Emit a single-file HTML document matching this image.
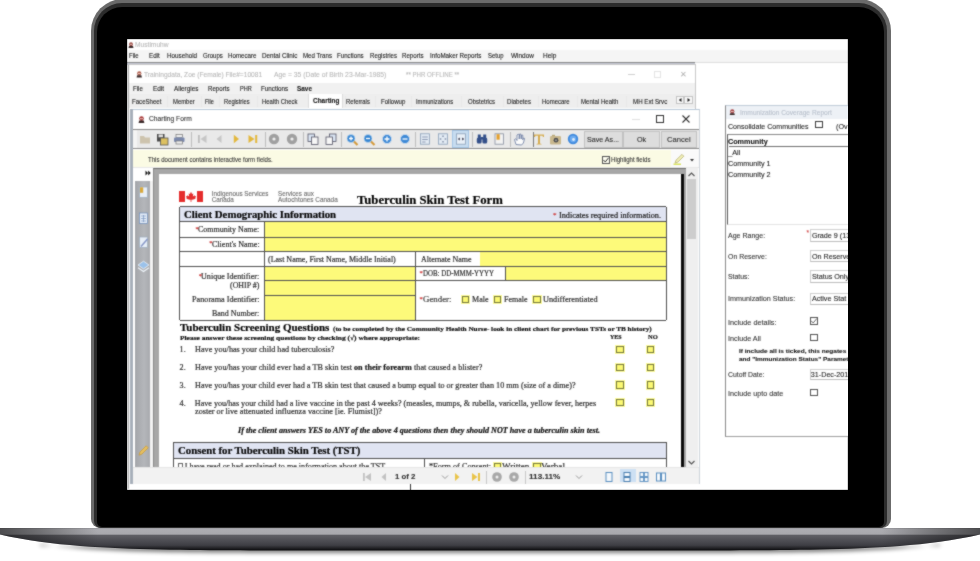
<!DOCTYPE html>
<html><head><meta charset="utf-8">
<style>
*{margin:0;padding:0;box-sizing:border-box}
html,body{width:980px;height:561px;overflow:hidden;background:#fff}
body{position:relative;font-family:"Liberation Sans",sans-serif;color:#222}
.a{position:absolute}
.lid{left:90.5px;top:-1px;width:800.5px;height:529px;border-radius:32px 32px 9px 9px;background:#6b6b6b}
.lid2{left:94px;top:3px;width:793px;height:525px;border-radius:28px 28px 7px 7px;background:#2c2c2c}
.lid3{left:97px;top:6.5px;width:787px;height:520.5px;border-radius:25px 25px 5px 5px;background:#000}
.screen{left:127px;top:39px;width:721px;height:451px;background:#fff;overflow:hidden}
.base{left:0;top:527px;width:980px;height:24px}
.t{white-space:nowrap;-webkit-text-stroke:0.1px currentColor}
.sf{-webkit-text-stroke:0.2px currentColor}
#scr{filter:url(#bl)}
</style></head><body>
<svg width="0" height="0" style="position:absolute"><filter id="bl" x="0" y="0" width="100%" height="100%" color-interpolation-filters="sRGB"><feConvolveMatrix order="3" kernelMatrix="1 2 1 2 14 2 1 2 1" divisor="26" edgeMode="duplicate"/></filter></svg>
<div class="a lid"></div>
<div class="a lid2"></div>
<div class="a lid3"></div>
<svg class="a" style="left:0;top:0" width="980" height="561" viewBox="0 0 980 561">
<defs>
<linearGradient id="bt" gradientUnits="userSpaceOnUse" x1="0" y1="528" x2="0" y2="551">
<stop offset="0" stop-color="#98989d"/><stop offset="0.06" stop-color="#adadb2"/><stop offset="0.27" stop-color="#a8a8ad"/><stop offset="0.31" stop-color="#606066"/><stop offset="0.75" stop-color="#3e3e44"/><stop offset="0.93" stop-color="#151518"/><stop offset="1" stop-color="#0a0a0a"/>
</linearGradient>
<linearGradient id="bh" gradientUnits="userSpaceOnUse" x1="0" y1="0" x2="980" y2="0">
<stop offset="0" stop-color="#000" stop-opacity="0.55"/><stop offset="0.04" stop-color="#000" stop-opacity="0.35"/><stop offset="0.1" stop-color="#000" stop-opacity="0"/><stop offset="0.9" stop-color="#000" stop-opacity="0"/><stop offset="0.96" stop-color="#000" stop-opacity="0.35"/><stop offset="1" stop-color="#000" stop-opacity="0.55"/>
</linearGradient>
<filter id="shb" x="-10%" y="-200%" width="120%" height="500%"><feGaussianBlur stdDeviation="2"/></filter>
</defs>
<path d="M40 546 L40 544.24 L50 545.51 L60 546.63 L70 547.60 L80 548.43 L90 549.16 L100 549.78 L110 550.32 L120 550.77 L130 551.16 L140 551.49 L150 551.77 L160 552.00 L170 552.19 L180 552.36 L190 552.49 L200 552.60 L210 552.68 L220 552.75 L230 552.81 L240 552.86 L250 552.89 L260 552.92 L270 552.94 L280 552.96 L290 552.97 L300 552.98 L310 552.99 L320 552.99 L330 552.99 L340 553.00 L350 553.00 L360 553.00 L370 553.00 L380 553.00 L390 553.00 L400 553.00 L410 553.00 L420 553.00 L430 553.00 L440 553.00 L450 553.00 L460 553.00 L470 553.00 L480 553.00 L490 553.00 L500 553.00 L510 553.00 L520 553.00 L530 553.00 L540 553.00 L550 553.00 L560 553.00 L570 553.00 L580 553.00 L590 553.00 L600 553.00 L610 553.00 L620 553.00 L630 553.00 L640 553.00 L650 552.99 L660 552.99 L670 552.99 L680 552.98 L690 552.97 L700 552.96 L710 552.94 L720 552.92 L730 552.89 L740 552.86 L750 552.81 L760 552.75 L770 552.68 L780 552.60 L790 552.49 L800 552.36 L810 552.19 L820 552.00 L830 551.77 L840 551.49 L850 551.16 L860 550.77 L870 550.32 L880 549.78 L890 549.16 L900 548.43 L910 547.60 L920 546.63 L930 545.51 L940 544.24 L940 546 Z" fill="#000" opacity="0.5" filter="url(#shb)"/>
<path d="M0 528 L980 528 L980 534.60 L970 536.74 L960 538.62 L950 540.28 L940 541.74 L930 543.01 L920 544.13 L910 545.10 L900 545.93 L890 546.66 L880 547.28 L870 547.82 L860 548.27 L850 548.66 L840 548.99 L830 549.27 L820 549.50 L810 549.69 L800 549.86 L790 549.99 L780 550.10 L770 550.18 L760 550.25 L750 550.31 L740 550.36 L730 550.39 L720 550.42 L710 550.44 L700 550.46 L690 550.47 L680 550.48 L670 550.49 L660 550.49 L650 550.49 L640 550.50 L630 550.50 L620 550.50 L610 550.50 L600 550.50 L590 550.50 L580 550.50 L570 550.50 L560 550.50 L550 550.50 L540 550.50 L530 550.50 L520 550.50 L510 550.50 L500 550.50 L490 550.50 L480 550.50 L470 550.50 L460 550.50 L450 550.50 L440 550.50 L430 550.50 L420 550.50 L410 550.50 L400 550.50 L390 550.50 L380 550.50 L370 550.50 L360 550.50 L350 550.50 L340 550.50 L330 550.49 L320 550.49 L310 550.49 L300 550.48 L290 550.47 L280 550.46 L270 550.44 L260 550.42 L250 550.39 L240 550.36 L230 550.31 L220 550.25 L210 550.18 L200 550.10 L190 549.99 L180 549.86 L170 549.69 L160 549.50 L150 549.27 L140 548.99 L130 548.66 L120 548.27 L110 547.82 L100 547.28 L90 546.66 L80 545.93 L70 545.10 L60 544.13 L50 543.01 L40 541.74 L30 540.28 L20 538.62 L10 536.74 L0 534.60 Z" fill="url(#bt)"/>
<path d="M0 528 L980 528 L980 534.60 L970 536.74 L960 538.62 L950 540.28 L940 541.74 L930 543.01 L920 544.13 L910 545.10 L900 545.93 L890 546.66 L880 547.28 L870 547.82 L860 548.27 L850 548.66 L840 548.99 L830 549.27 L820 549.50 L810 549.69 L800 549.86 L790 549.99 L780 550.10 L770 550.18 L760 550.25 L750 550.31 L740 550.36 L730 550.39 L720 550.42 L710 550.44 L700 550.46 L690 550.47 L680 550.48 L670 550.49 L660 550.49 L650 550.49 L640 550.50 L630 550.50 L620 550.50 L610 550.50 L600 550.50 L590 550.50 L580 550.50 L570 550.50 L560 550.50 L550 550.50 L540 550.50 L530 550.50 L520 550.50 L510 550.50 L500 550.50 L490 550.50 L480 550.50 L470 550.50 L460 550.50 L450 550.50 L440 550.50 L430 550.50 L420 550.50 L410 550.50 L400 550.50 L390 550.50 L380 550.50 L370 550.50 L360 550.50 L350 550.50 L340 550.50 L330 550.49 L320 550.49 L310 550.49 L300 550.48 L290 550.47 L280 550.46 L270 550.44 L260 550.42 L250 550.39 L240 550.36 L230 550.31 L220 550.25 L210 550.18 L200 550.10 L190 549.99 L180 549.86 L170 549.69 L160 549.50 L150 549.27 L140 548.99 L130 548.66 L120 548.27 L110 547.82 L100 547.28 L90 546.66 L80 545.93 L70 545.10 L60 544.13 L50 543.01 L40 541.74 L30 540.28 L20 538.62 L10 536.74 L0 534.60 Z" fill="url(#bh)"/>
</svg>
<div class="a" id="scr" style="left:0;top:0;width:980px;height:561px;clip-path:inset(39px 132px 71px 127px)">
<div class="a" style="left:127.0px;top:39.0px;width:721.0px;height:451.0px;background:#fff"></div>
<div class="a" style="left:127.0px;top:39.0px;width:721.0px;height:11.0px;background:#fff"></div>
<svg class="a" style="left:128.0px;top:41.5px" width="6" height="6" viewBox="0 0 7 7"><circle cx="3.5" cy="2.6" r="2.3" fill="#9a4a44"/><path d="M0.6 7 L1.2 4.6 L5.8 4.6 L6.4 7Z" fill="#3a2a2a"/><rect x="2" y="2.2" width="3" height="1" fill="#e8c8c0"/></svg>
<div class="a t" style="left:135.2px;top:41.5px;font-family:'Liberation Sans',sans-serif;font-weight:normal;font-style:normal;font-size:6.6px;line-height:6.6px;color:#b8b8b8;transform:scaleX(1.007);transform-origin:0 0;">Mustimuhw</div>
<div class="a" style="left:127.0px;top:50.0px;width:721.0px;height:12.0px;background:#f5f5f5"></div>
<div class="a t" style="left:129.0px;top:52.8px;font-family:'Liberation Sans',sans-serif;font-weight:normal;font-style:normal;font-size:6.7px;line-height:6.7px;color:#1a1a1a;transform:scaleX(0.898);transform-origin:0 0;">File</div>
<div class="a t" style="left:149.0px;top:52.8px;font-family:'Liberation Sans',sans-serif;font-weight:normal;font-style:normal;font-size:6.7px;line-height:6.7px;color:#1a1a1a;transform:scaleX(0.927);transform-origin:0 0;">Edit</div>
<div class="a t" style="left:167.3px;top:52.8px;font-family:'Liberation Sans',sans-serif;font-weight:normal;font-style:normal;font-size:6.7px;line-height:6.7px;color:#1a1a1a;transform:scaleX(0.940);transform-origin:0 0;">Household</div>
<div class="a t" style="left:202.5px;top:52.8px;font-family:'Liberation Sans',sans-serif;font-weight:normal;font-style:normal;font-size:6.7px;line-height:6.7px;color:#1a1a1a;transform:scaleX(0.906);transform-origin:0 0;">Groups</div>
<div class="a t" style="left:228.4px;top:52.8px;font-family:'Liberation Sans',sans-serif;font-weight:normal;font-style:normal;font-size:6.7px;line-height:6.7px;color:#1a1a1a;transform:scaleX(0.922);transform-origin:0 0;">Homecare</div>
<div class="a t" style="left:262.0px;top:52.8px;font-family:'Liberation Sans',sans-serif;font-weight:normal;font-style:normal;font-size:6.7px;line-height:6.7px;color:#1a1a1a;transform:scaleX(0.941);transform-origin:0 0;">Dental Clinic</div>
<div class="a t" style="left:302.9px;top:52.8px;font-family:'Liberation Sans',sans-serif;font-weight:normal;font-style:normal;font-size:6.7px;line-height:6.7px;color:#1a1a1a;transform:scaleX(0.916);transform-origin:0 0;">Med Trans</div>
<div class="a t" style="left:337.4px;top:52.8px;font-family:'Liberation Sans',sans-serif;font-weight:normal;font-style:normal;font-size:6.7px;line-height:6.7px;color:#1a1a1a;transform:scaleX(0.919);transform-origin:0 0;">Functions</div>
<div class="a t" style="left:369.6px;top:52.8px;font-family:'Liberation Sans',sans-serif;font-weight:normal;font-style:normal;font-size:6.7px;line-height:6.7px;color:#1a1a1a;transform:scaleX(0.906);transform-origin:0 0;">Registries</div>
<div class="a t" style="left:402.4px;top:52.8px;font-family:'Liberation Sans',sans-serif;font-weight:normal;font-style:normal;font-size:6.7px;line-height:6.7px;color:#1a1a1a;transform:scaleX(0.921);transform-origin:0 0;">Reports</div>
<div class="a t" style="left:430.0px;top:52.8px;font-family:'Liberation Sans',sans-serif;font-weight:normal;font-style:normal;font-size:6.7px;line-height:6.7px;color:#1a1a1a;transform:scaleX(0.933);transform-origin:0 0;">InfoMaker Reports</div>
<div class="a t" style="left:487.5px;top:52.8px;font-family:'Liberation Sans',sans-serif;font-weight:normal;font-style:normal;font-size:6.7px;line-height:6.7px;color:#1a1a1a;transform:scaleX(0.885);transform-origin:0 0;">Setup</div>
<div class="a t" style="left:511.2px;top:52.8px;font-family:'Liberation Sans',sans-serif;font-weight:normal;font-style:normal;font-size:6.7px;line-height:6.7px;color:#1a1a1a;transform:scaleX(0.965);transform-origin:0 0;">Window</div>
<div class="a t" style="left:543.0px;top:52.8px;font-family:'Liberation Sans',sans-serif;font-weight:normal;font-style:normal;font-size:6.7px;line-height:6.7px;color:#1a1a1a;transform:scaleX(0.972);transform-origin:0 0;">Help</div>
<div class="a" style="left:127.0px;top:61.8px;width:568.0px;height:1.6px;background:#8a8a8a"></div>
<div class="a" style="left:695.0px;top:61.8px;width:153.0px;height:1.2px;background:#dedede"></div>
<div class="a" style="left:127.0px;top:63.4px;width:568.0px;height:1.2px;background:#c4c8d4"></div>
<div class="a" style="left:127.5px;top:64.3px;width:568.0px;height:425.0px;background:#fff;border:1px solid #c8c8c8;border-left:1px solid #a8a8a8"></div>
<svg class="a" style="left:135.5px;top:71.2px" width="6.5" height="6.5" viewBox="0 0 7 7"><circle cx="3.5" cy="2.6" r="2.3" fill="#b06050"/><path d="M0.6 7 L1.2 4.6 L5.8 4.6 L6.4 7Z" fill="#3a2a2a"/><rect x="2" y="2.2" width="3" height="1" fill="#e8c8c0"/></svg>
<div class="a t" style="left:143.9px;top:71.9px;font-family:'Liberation Sans',sans-serif;font-weight:normal;font-style:normal;font-size:6.7px;line-height:6.7px;color:#b8b8b8;transform:scaleX(0.987);transform-origin:0 0;">Trainingdata, Zoe (Female)  File#=10081</div>
<div class="a t" style="left:274.0px;top:71.9px;font-family:'Liberation Sans',sans-serif;font-weight:normal;font-style:normal;font-size:6.7px;line-height:6.7px;color:#b8b8b8;transform:scaleX(1.015);transform-origin:0 0;">Age = 35 (Date of Birth 23-Mar-1985)</div>
<div class="a t" style="left:405.7px;top:72.1px;font-family:'Liberation Sans',sans-serif;font-weight:normal;font-style:normal;font-size:6.4px;line-height:6.4px;color:#b8b8b8;transform:scaleX(0.955);transform-origin:0 0;">** PHR OFFLINE **</div>
<div class="a" style="left:628.0px;top:74.0px;width:7.0px;height:1.0px;background:#d0d0d0"></div>
<div class="a" style="left:654.0px;top:71.0px;width:6.5px;height:6.5px;border:1px solid #e4e4e4"></div>
<div class="a t" style="left:679.5px;top:71.0px;font-family:'Liberation Sans',sans-serif;font-weight:normal;font-style:normal;font-size:8px;line-height:8px;color:#b4b4b4;">✕</div>
<div class="a" style="left:128.5px;top:82.8px;width:566.0px;height:11.0px;background:#f1f1f1"></div>
<div class="a t" style="left:133.4px;top:85.7px;font-family:'Liberation Sans',sans-serif;font-weight:normal;font-style:normal;font-size:6.7px;line-height:6.7px;color:#1a1a1a;transform:scaleX(0.908);transform-origin:0 0;">File</div>
<div class="a t" style="left:152.7px;top:85.7px;font-family:'Liberation Sans',sans-serif;font-weight:normal;font-style:normal;font-size:6.7px;line-height:6.7px;color:#1a1a1a;transform:scaleX(0.961);transform-origin:0 0;">Edit</div>
<div class="a t" style="left:173.9px;top:85.7px;font-family:'Liberation Sans',sans-serif;font-weight:normal;font-style:normal;font-size:6.7px;line-height:6.7px;color:#1a1a1a;transform:scaleX(0.950);transform-origin:0 0;">Allergies</div>
<div class="a t" style="left:207.9px;top:85.7px;font-family:'Liberation Sans',sans-serif;font-weight:normal;font-style:normal;font-size:6.7px;line-height:6.7px;color:#1a1a1a;transform:scaleX(0.916);transform-origin:0 0;">Reports</div>
<div class="a t" style="left:239.7px;top:85.7px;font-family:'Liberation Sans',sans-serif;font-weight:normal;font-style:normal;font-size:6.7px;line-height:6.7px;color:#1a1a1a;transform:scaleX(0.827);transform-origin:0 0;">PHR</div>
<div class="a t" style="left:261.2px;top:85.7px;font-family:'Liberation Sans',sans-serif;font-weight:normal;font-style:normal;font-size:6.7px;line-height:6.7px;color:#1a1a1a;transform:scaleX(0.936);transform-origin:0 0;">Functions</div>
<div class="a t" style="left:297.0px;top:85.7px;font-family:'Liberation Sans',sans-serif;font-weight:bold;font-style:normal;font-size:6.7px;line-height:6.7px;color:#1a1a1a;transform:scaleX(0.959);transform-origin:0 0;">Save</div>
<div class="a" style="left:128.5px;top:93.8px;width:566.0px;height:14.3px;background:#eeeeee"></div>
<div class="a t" style="left:132.1px;top:99.2px;font-family:'Liberation Sans',sans-serif;font-weight:normal;font-style:normal;font-size:6.7px;line-height:6.7px;color:#222;transform:scaleX(0.910);transform-origin:0 0;">FaceSheet</div>
<div class="a t" style="left:173.3px;top:99.2px;font-family:'Liberation Sans',sans-serif;font-weight:normal;font-style:normal;font-size:6.7px;line-height:6.7px;color:#222;transform:scaleX(0.883);transform-origin:0 0;">Member</div>
<div class="a t" style="left:205.1px;top:99.2px;font-family:'Liberation Sans',sans-serif;font-weight:normal;font-style:normal;font-size:6.7px;line-height:6.7px;color:#222;transform:scaleX(0.824);transform-origin:0 0;">File</div>
<div class="a t" style="left:223.5px;top:99.2px;font-family:'Liberation Sans',sans-serif;font-weight:normal;font-style:normal;font-size:6.7px;line-height:6.7px;color:#222;transform:scaleX(0.863);transform-origin:0 0;">Registries</div>
<div class="a t" style="left:262.1px;top:99.2px;font-family:'Liberation Sans',sans-serif;font-weight:normal;font-style:normal;font-size:6.7px;line-height:6.7px;color:#222;transform:scaleX(0.883);transform-origin:0 0;">Health Check</div>
<div class="a" style="left:308.3px;top:94.3px;width:34.3px;height:14.0px;background:#fff;border-left:1px solid #dcdcdc;border-right:1px solid #dcdcdc"></div>
<div class="a t" style="left:312.5px;top:97.9px;font-family:'Liberation Sans',sans-serif;font-weight:bold;font-style:normal;font-size:6.6px;line-height:6.6px;color:#111;transform:scaleX(0.977);transform-origin:0 0;">Charting</div>
<div class="a t" style="left:345.6px;top:99.2px;font-family:'Liberation Sans',sans-serif;font-weight:normal;font-style:normal;font-size:6.7px;line-height:6.7px;color:#222;transform:scaleX(0.879);transform-origin:0 0;">Referrals</div>
<div class="a t" style="left:380.9px;top:99.2px;font-family:'Liberation Sans',sans-serif;font-weight:normal;font-style:normal;font-size:6.7px;line-height:6.7px;color:#222;transform:scaleX(0.910);transform-origin:0 0;">Followup</div>
<div class="a t" style="left:416.4px;top:99.2px;font-family:'Liberation Sans',sans-serif;font-weight:normal;font-style:normal;font-size:6.7px;line-height:6.7px;color:#222;transform:scaleX(0.859);transform-origin:0 0;">Immunizations</div>
<div class="a t" style="left:467.8px;top:99.2px;font-family:'Liberation Sans',sans-serif;font-weight:normal;font-style:normal;font-size:6.7px;line-height:6.7px;color:#222;transform:scaleX(0.895);transform-origin:0 0;">Obstetrics</div>
<div class="a t" style="left:507.0px;top:99.2px;font-family:'Liberation Sans',sans-serif;font-weight:normal;font-style:normal;font-size:6.7px;line-height:6.7px;color:#222;transform:scaleX(0.908);transform-origin:0 0;">Diabetes</div>
<div class="a t" style="left:542.1px;top:99.2px;font-family:'Liberation Sans',sans-serif;font-weight:normal;font-style:normal;font-size:6.7px;line-height:6.7px;color:#222;transform:scaleX(0.896);transform-origin:0 0;">Homecare</div>
<div class="a t" style="left:581.3px;top:99.2px;font-family:'Liberation Sans',sans-serif;font-weight:normal;font-style:normal;font-size:6.7px;line-height:6.7px;color:#222;transform:scaleX(0.907);transform-origin:0 0;">Mental Health</div>
<div class="a t" style="left:632.8px;top:99.2px;font-family:'Liberation Sans',sans-serif;font-weight:normal;font-style:normal;font-size:6.7px;line-height:6.7px;color:#222;transform:scaleX(0.921);transform-origin:0 0;">MH Ext Srvc</div>
<div class="a" style="left:167.0px;top:96.0px;width:1.0px;height:11.0px;background:#e8e8e8"></div>
<div class="a" style="left:201.0px;top:96.0px;width:1.0px;height:11.0px;background:#e8e8e8"></div>
<div class="a" style="left:219.0px;top:96.0px;width:1.0px;height:11.0px;background:#e8e8e8"></div>
<div class="a" style="left:257.0px;top:96.0px;width:1.0px;height:11.0px;background:#e8e8e8"></div>
<div class="a" style="left:345.0px;top:96.0px;width:1.0px;height:11.0px;background:#e8e8e8"></div>
<div class="a" style="left:375.0px;top:96.0px;width:1.0px;height:11.0px;background:#e8e8e8"></div>
<div class="a" style="left:411.0px;top:96.0px;width:1.0px;height:11.0px;background:#e8e8e8"></div>
<div class="a" style="left:461.0px;top:96.0px;width:1.0px;height:11.0px;background:#e8e8e8"></div>
<div class="a" style="left:503.0px;top:96.0px;width:1.0px;height:11.0px;background:#e8e8e8"></div>
<div class="a" style="left:538.0px;top:96.0px;width:1.0px;height:11.0px;background:#e8e8e8"></div>
<div class="a" style="left:577.0px;top:96.0px;width:1.0px;height:11.0px;background:#e8e8e8"></div>
<div class="a" style="left:626.0px;top:96.0px;width:1.0px;height:11.0px;background:#e8e8e8"></div>
<div class="a" style="left:675.7px;top:95.9px;width:8.5px;height:8.5px;background:#f8f8f8;border:1px solid #c4c4c4"></div>
<div class="a" style="left:684.3px;top:95.9px;width:8.5px;height:8.5px;background:#f8f8f8;border:1px solid #c4c4c4"></div>
<svg class="a" style="left:677.0px;top:96.2px" width="6" height="8" viewBox="0 0 6 8"><path d="M4.5 2 L1.8 4 L4.5 6Z" fill="#222"/></svg>
<svg class="a" style="left:685.5px;top:96.2px" width="6" height="8" viewBox="0 0 6 8"><path d="M1.5 2 L4.2 4 L1.5 6Z" fill="#222"/></svg>
<div class="a" style="left:130.0px;top:109.3px;width:569.5px;height:376.0px;background:#fff;border:1px solid #cdd3da;border-top:1px solid #b8c8d8"></div>
<div class="a" style="left:130.0px;top:109.3px;width:3.0px;height:376.0px;background:#a8b0ba"></div>
<svg class="a" style="left:137.5px;top:115.5px" width="7" height="7" viewBox="0 0 7 7"><circle cx="3.5" cy="2.6" r="2.3" fill="#a83838"/><path d="M0.6 7 L1.2 4.6 L5.8 4.6 L6.4 7Z" fill="#3a2a2a"/><rect x="2" y="2.2" width="3" height="1" fill="#e8c8c0"/></svg>
<div class="a t" style="left:148.6px;top:116.1px;font-family:'Liberation Sans',sans-serif;font-weight:normal;font-style:normal;font-size:6.8px;line-height:6.8px;color:#333;transform:scaleX(0.983);transform-origin:0 0;">Charting Form</div>
<div class="a" style="left:632.0px;top:118.8px;width:8.0px;height:1.0px;background:#e0e0e0"></div>
<div class="a" style="left:656.0px;top:114.8px;width:8.0px;height:8.0px;border:1.3px solid #333"></div>
<svg class="a" style="left:681.4px;top:114.0px" width="10" height="10" viewBox="0 0 10 10"><path d="M1.5 1.5 L8.5 8.5 M8.5 1.5 L1.5 8.5" stroke="#333" stroke-width="1.1"/></svg>
<div class="a" style="left:133.0px;top:128.6px;width:566.0px;height:20.6px;background:#e9e9e9;border-top:1.4px solid #8a8a8a;border-bottom:1.4px solid #8e8e8e"></div>
<div class="a" style="left:133.0px;top:130.0px;width:4.0px;height:18.0px;background:#f4f4f4"></div>
<div class="a" style="left:133.0px;top:149.5px;width:538.0px;height:17.0px;background:#fbfbe4"></div>
<div class="a" style="left:671.0px;top:149.5px;width:27.5px;height:18.0px;background:#fafafa"></div>
<div class="a" style="left:133.0px;top:166.5px;width:566.0px;height:2.0px;background:#e8e8e8"></div>
<div class="a t" style="left:148.4px;top:157.1px;font-family:'Liberation Sans',sans-serif;font-weight:normal;font-style:normal;font-size:6.9px;line-height:6.9px;color:#333;transform:scaleX(0.880);transform-origin:0 0;">This document contains interactive form fields.</div>
<div class="a" style="left:602.0px;top:155.5px;width:8.0px;height:8.0px;border:1px solid #555;background:#fdfdf0"></div>
<svg class="a" style="left:602.0px;top:155.5px" width="8" height="8" viewBox="0 0 8 8"><path d="M1.5 4 L3.3 6 L6.5 1.8" stroke="#333" stroke-width="1" fill="none"/></svg>
<div class="a t" style="left:610.8px;top:157.0px;font-family:'Liberation Sans',sans-serif;font-weight:normal;font-style:normal;font-size:6.4px;line-height:6.4px;color:#333;transform:scaleX(0.949);transform-origin:0 0;">Highlight fields</div>
<svg class="a" style="left:689.2px;top:156.5px" width="6" height="6" viewBox="0 0 6 6"><path d="M1 2 L5 2 L3 4.5Z" fill="#333"/></svg>
<div class="a" style="left:133.0px;top:168.0px;width:566.0px;height:301.0px;background:#fff"></div>
<div class="a" style="left:153.4px;top:168.2px;width:532.3px;height:301.0px;background:#a7a7a7;border-top:1.5px solid #6e6e6e;border-left:1px solid #8a8a8a"></div>
<div class="a" style="left:159.4px;top:174.2px;width:522.0px;height:295.0px;background:#fff"></div>
<div class="a" style="left:681.4px;top:174.2px;width:2.6px;height:295.0px;background:#0c0c0c"></div>
<div class="a" style="left:685.7px;top:168.2px;width:12.5px;height:301.0px;background:#efefef"></div>
<div class="a" style="left:687.0px;top:179.0px;width:9.0px;height:60.0px;background:#cdcdcd"></div>
<svg class="a" style="left:687.0px;top:171.0px" width="9" height="7" viewBox="0 0 9 7"><path d="M1.5 5 L4.5 2 L7.5 5" stroke="#555" stroke-width="1.2" fill="none"/></svg>
<svg class="a" style="left:687.0px;top:458.5px" width="9" height="7" viewBox="0 0 9 7"><path d="M1.5 2 L4.5 5 L7.5 2" stroke="#555" stroke-width="1.2" fill="none"/></svg>
<svg class="a" style="left:144.6px;top:170.2px" width="6" height="6" viewBox="0 0 6 6"><path d="M0.5 0.5 L3 3 L0.5 5.5Z M3.2 0.5 L5.7 3 L3.2 5.5Z" fill="#111"/></svg>
<div class="a" style="left:135.0px;top:181.0px;width:15.2px;height:286.4px;background:linear-gradient(90deg,#a4a6aa,#b4b6ba 60%,#a8aaae)"></div>
<div class="a" style="left:150.2px;top:181.0px;width:3.2px;height:286.4px;background:#f2f2f2"></div>
<div class="a" style="left:179.0px;top:190.5px;width:5.6px;height:11.4px;background:#e52d2d"></div>
<div class="a" style="left:196.9px;top:190.5px;width:5.7px;height:11.4px;background:#e52d2d"></div>
<svg class="a" style="left:184.7px;top:190.5px" width="12" height="11.4" viewBox="0 0 12 11.4"><path d="M6 0.8 L7.1 3 L8.3 2.4 L7.9 5.6 L9.6 4.2 L10 5.3 L11.2 5.1 L10.2 7.3 L10.8 7.8 L7.3 8.7 L6.4 8.8 L6.4 11 L5.6 11 L5.6 8.8 L4.7 8.7 L1.2 7.8 L1.8 7.3 L0.8 5.1 L2 5.3 L2.4 4.2 L4.1 5.6 L3.7 2.4 L4.9 3 Z" fill="#e52d2d"/></svg>
<div class="a t" style="left:211.8px;top:190.7px;font-family:'Liberation Sans',sans-serif;font-weight:normal;font-style:normal;font-size:6.3px;line-height:6.3px;color:#6a6a6a;">Indigenous Services</div>
<div class="a t" style="left:211.8px;top:197.1px;font-family:'Liberation Sans',sans-serif;font-weight:normal;font-style:normal;font-size:6.3px;line-height:6.3px;color:#6a6a6a;">Canada</div>
<div class="a t" style="left:278.0px;top:190.7px;font-family:'Liberation Sans',sans-serif;font-weight:normal;font-style:normal;font-size:6.3px;line-height:6.3px;color:#6a6a6a;transform:scaleX(0.993);transform-origin:0 0;">Services aux</div>
<div class="a t" style="left:278.0px;top:197.1px;font-family:'Liberation Sans',sans-serif;font-weight:normal;font-style:normal;font-size:6.3px;line-height:6.3px;color:#6a6a6a;transform:scaleX(1.015);transform-origin:0 0;">Autochtones Canada</div>
<div class="a t sf" style="left:356.9px;top:193.7px;font-family:'Liberation Serif',serif;font-weight:bold;font-style:normal;font-size:12.4px;line-height:12.4px;color:#000;transform:scaleX(1.025);transform-origin:0 0;">Tuberculin Skin Test Form</div>
<div class="a" style="left:179.7px;top:206.6px;width:486.8px;height:15.4px;background:#e0e4f2"></div>
<div class="a t sf" style="left:184.1px;top:209.9px;font-family:'Liberation Serif',serif;font-weight:bold;font-style:normal;font-size:10.2px;line-height:10.2px;color:#050505;transform:scaleX(1.058);transform-origin:0 0;">Client Demographic Information</div>
<div class="a t sf" style="left:558.8px;top:211.9px;font-family:'Liberation Serif',serif;font-weight:normal;font-style:normal;font-size:8.0px;line-height:8.0px;color:#1a1a1a;transform:scaleX(1.027);transform-origin:0 0;">Indicates required information.</div>
<div class="a t sf" style="left:553.1px;top:211.7px;font-family:'Liberation Serif',serif;font-weight:normal;font-style:normal;font-size:7px;line-height:7px;color:#d04040;">*</div>
<div class="a" style="left:264.3px;top:222.0px;width:402.2px;height:29.8px;background:#fdfa7a"></div>
<div class="a" style="left:479.7px;top:251.8px;width:186.8px;height:14.4px;background:#fdfa7a"></div>
<div class="a" style="left:506.0px;top:266.2px;width:160.5px;height:14.6px;background:#fdfa7a"></div>
<div class="a" style="left:264.3px;top:266.2px;width:151.5px;height:53.9px;background:#fdfa7a"></div>
<div class="a" style="left:179.7px;top:206.0px;width:486.8px;height:1.1px;background:#505050"></div>
<div class="a" style="left:179.7px;top:221.4px;width:486.8px;height:1.1px;background:#505050"></div>
<div class="a" style="left:179.7px;top:236.6px;width:486.8px;height:1.1px;background:#505050"></div>
<div class="a" style="left:179.7px;top:251.2px;width:486.8px;height:1.1px;background:#505050"></div>
<div class="a" style="left:179.7px;top:265.6px;width:486.8px;height:1.1px;background:#505050"></div>
<div class="a" style="left:264.3px;top:280.2px;width:402.2px;height:1.1px;background:#505050"></div>
<div class="a" style="left:264.3px;top:294.6px;width:151.5px;height:1.1px;background:#505050"></div>
<div class="a" style="left:179.7px;top:319.6px;width:486.8px;height:1.1px;background:#505050"></div>
<div class="a" style="left:179.1px;top:206.6px;width:1.1px;height:113.5px;background:#505050"></div>
<div class="a" style="left:666.0px;top:206.6px;width:1.1px;height:113.5px;background:#505050"></div>
<div class="a" style="left:263.8px;top:222.0px;width:1.1px;height:98.1px;background:#505050"></div>
<div class="a" style="left:415.2px;top:251.8px;width:1.1px;height:68.3px;background:#505050"></div>
<div class="a" style="left:505.4px;top:266.2px;width:1.1px;height:14.6px;background:#505050"></div>
<div class="a t sf" style="left:197.9px;top:226.0px;font-family:'Liberation Serif',serif;font-weight:normal;font-style:normal;font-size:8.1px;line-height:8.1px;color:#2e2e2e;transform:scaleX(0.984);transform-origin:0 0;">Community Name:</div>
<div class="a t sf" style="left:195.6px;top:225.7px;font-family:'Liberation Serif',serif;font-weight:normal;font-style:normal;font-size:6.5px;line-height:6.5px;color:#d04040;">*</div>
<div class="a t sf" style="left:211.5px;top:240.7px;font-family:'Liberation Serif',serif;font-weight:normal;font-style:normal;font-size:8.1px;line-height:8.1px;color:#2e2e2e;transform:scaleX(0.993);transform-origin:0 0;">Client's Name:</div>
<div class="a t sf" style="left:209.2px;top:240.4px;font-family:'Liberation Serif',serif;font-weight:normal;font-style:normal;font-size:6.5px;line-height:6.5px;color:#d04040;">*</div>
<div class="a t sf" style="left:201.0px;top:273.0px;font-family:'Liberation Serif',serif;font-weight:normal;font-style:normal;font-size:8.1px;line-height:8.1px;color:#2e2e2e;">Unique Identifier:</div>
<div class="a t sf" style="left:198.7px;top:272.7px;font-family:'Liberation Serif',serif;font-weight:normal;font-style:normal;font-size:6.5px;line-height:6.5px;color:#d04040;">*</div>
<div class="a t sf" style="left:229.8px;top:282.3px;font-family:'Liberation Serif',serif;font-weight:normal;font-style:normal;font-size:8.1px;line-height:8.1px;color:#2e2e2e;transform:scaleX(0.978);transform-origin:0 0;">(OHIP #)</div>
<div class="a t sf" style="left:191.6px;top:295.9px;font-family:'Liberation Serif',serif;font-weight:normal;font-style:normal;font-size:8.1px;line-height:8.1px;color:#2e2e2e;transform:scaleX(1.012);transform-origin:0 0;">Panorama Identifier:</div>
<div class="a t sf" style="left:212.0px;top:310.0px;font-family:'Liberation Serif',serif;font-weight:normal;font-style:normal;font-size:8.1px;line-height:8.1px;color:#2e2e2e;transform:scaleX(0.985);transform-origin:0 0;">Band Number:</div>
<div class="a t sf" style="left:268.0px;top:255.5px;font-family:'Liberation Serif',serif;font-weight:normal;font-style:normal;font-size:8.1px;line-height:8.1px;color:#2e2e2e;transform:scaleX(0.985);transform-origin:0 0;">(Last Name, First Name, Middle Initial)</div>
<div class="a t sf" style="left:420.5px;top:255.5px;font-family:'Liberation Serif',serif;font-weight:normal;font-style:normal;font-size:8.1px;line-height:8.1px;color:#2e2e2e;transform:scaleX(0.981);transform-origin:0 0;">Alternate Name</div>
<div class="a t sf" style="left:419.5px;top:270.0px;font-family:'Liberation Serif',serif;font-weight:normal;font-style:normal;font-size:6.5px;line-height:6.5px;color:#d04040;">*</div>
<div class="a t sf" style="left:422.5px;top:270.1px;font-family:'Liberation Serif',serif;font-weight:normal;font-style:normal;font-size:8.1px;line-height:8.1px;color:#2e2e2e;transform:scaleX(0.851);transform-origin:0 0;">DOB: DD-MMM-YYYY</div>
<div class="a t sf" style="left:419.5px;top:296.0px;font-family:'Liberation Serif',serif;font-weight:normal;font-style:normal;font-size:6.5px;line-height:6.5px;color:#d04040;">*</div>
<div class="a t sf" style="left:422.5px;top:296.2px;font-family:'Liberation Serif',serif;font-weight:normal;font-style:normal;font-size:8.1px;line-height:8.1px;color:#444;transform:scaleX(1.092);transform-origin:0 0;">Gender:</div>
<div class="a" style="left:461.0px;top:295.0px;width:9.3px;height:9.3px;background:#fdfc9a"></div>
<div class="a" style="left:462.0px;top:296.0px;width:7.3px;height:7.3px;background:#fbf872;border:1px solid #777a40"></div>
<div class="a t sf" style="left:471.5px;top:296.2px;font-family:'Liberation Serif',serif;font-weight:normal;font-style:normal;font-size:8.1px;line-height:8.1px;color:#2e2e2e;transform:scaleX(0.991);transform-origin:0 0;">Male</div>
<div class="a" style="left:493.0px;top:295.0px;width:9.3px;height:9.3px;background:#fdfc9a"></div>
<div class="a" style="left:494.0px;top:296.0px;width:7.3px;height:7.3px;background:#fbf872;border:1px solid #777a40"></div>
<div class="a t sf" style="left:503.5px;top:296.2px;font-family:'Liberation Serif',serif;font-weight:normal;font-style:normal;font-size:8.1px;line-height:8.1px;color:#2e2e2e;transform:scaleX(0.986);transform-origin:0 0;">Female</div>
<div class="a" style="left:532.4px;top:295.0px;width:9.3px;height:9.3px;background:#fdfc9a"></div>
<div class="a" style="left:533.4px;top:296.0px;width:7.3px;height:7.3px;background:#fbf872;border:1px solid #777a40"></div>
<div class="a t sf" style="left:542.9px;top:296.2px;font-family:'Liberation Serif',serif;font-weight:normal;font-style:normal;font-size:8.1px;line-height:8.1px;color:#2e2e2e;transform:scaleX(1.023);transform-origin:0 0;">Undifferentiated</div>
<div class="a t sf" style="left:180.1px;top:322.9px;font-family:'Liberation Serif',serif;font-weight:bold;font-style:normal;font-size:10.4px;line-height:10.4px;color:#050505;transform:scaleX(1.057);transform-origin:0 0;">Tuberculin Screening Questions</div>
<div class="a t sf" style="left:332.5px;top:325.9px;font-family:'Liberation Serif',serif;font-weight:bold;font-style:normal;font-size:7.1px;line-height:7.1px;color:#111;transform:scaleX(1.021);transform-origin:0 0;">(to be completed by the Community Health Nurse- look in client chart for previous TSTs or TB history)</div>
<div class="a t sf" style="left:180.1px;top:334.6px;font-family:'Liberation Serif',serif;font-weight:bold;font-style:normal;font-size:7.1px;line-height:7.1px;color:#111;transform:scaleX(1.050);transform-origin:0 0;">Please answer these screening questions by checking (√) where appropriate:</div>
<div class="a t sf" style="left:609.8px;top:334.0px;font-family:'Liberation Serif',serif;font-weight:bold;font-style:normal;font-size:7.0px;line-height:7.0px;color:#111;transform:scaleX(0.859);transform-origin:0 0;">YES</div>
<div class="a t sf" style="left:647.6px;top:334.0px;font-family:'Liberation Serif',serif;font-weight:bold;font-style:normal;font-size:7.0px;line-height:7.0px;color:#111;transform:scaleX(0.924);transform-origin:0 0;">NO</div>
<div class="a t sf" style="left:179.6px;top:346.0px;font-family:'Liberation Serif',serif;font-weight:normal;font-style:normal;font-size:8.1px;line-height:8.1px;color:#2e2e2e;">1.</div>
<div class="a t sf" style="left:194.8px;top:346.0px;font-family:'Liberation Serif',serif;font-weight:normal;font-style:normal;font-size:8.1px;line-height:8.1px;color:#2e2e2e;transform:scaleX(1.012);transform-origin:0 0;">Have you/has your child had tuberculosis?</div>
<div class="a" style="left:615.4px;top:344.7px;width:9.2px;height:9.2px;background:#fdfc9a"></div>
<div class="a" style="left:616.4px;top:345.7px;width:7.2px;height:7.2px;background:#fbf872;border:1px solid #777a40"></div>
<div class="a" style="left:645.5px;top:344.7px;width:9.2px;height:9.2px;background:#fdfc9a"></div>
<div class="a" style="left:646.5px;top:345.7px;width:7.2px;height:7.2px;background:#fbf872;border:1px solid #777a40"></div>
<div class="a t sf" style="left:179.6px;top:363.9px;font-family:'Liberation Serif',serif;font-weight:normal;font-style:normal;font-size:8.1px;line-height:8.1px;color:#2e2e2e;">2.</div>
<div class="a" style="left:615.4px;top:362.6px;width:9.2px;height:9.2px;background:#fdfc9a"></div>
<div class="a" style="left:616.4px;top:363.6px;width:7.2px;height:7.2px;background:#fbf872;border:1px solid #777a40"></div>
<div class="a" style="left:645.5px;top:362.6px;width:9.2px;height:9.2px;background:#fdfc9a"></div>
<div class="a" style="left:646.5px;top:363.6px;width:7.2px;height:7.2px;background:#fbf872;border:1px solid #777a40"></div>
<div class="a t sf" style="left:179.6px;top:381.7px;font-family:'Liberation Serif',serif;font-weight:normal;font-style:normal;font-size:8.1px;line-height:8.1px;color:#2e2e2e;">3.</div>
<div class="a t sf" style="left:194.8px;top:381.7px;font-family:'Liberation Serif',serif;font-weight:normal;font-style:normal;font-size:8.1px;line-height:8.1px;color:#2e2e2e;transform:scaleX(1.007);transform-origin:0 0;">Have you/has your child ever had a TB skin test that caused a bump equal to or greater than 10 mm (size of a dime)?</div>
<div class="a" style="left:615.4px;top:380.4px;width:9.2px;height:9.2px;background:#fdfc9a"></div>
<div class="a" style="left:616.4px;top:381.4px;width:7.2px;height:7.2px;background:#fbf872;border:1px solid #777a40"></div>
<div class="a" style="left:645.5px;top:380.4px;width:9.2px;height:9.2px;background:#fdfc9a"></div>
<div class="a" style="left:646.5px;top:381.4px;width:7.2px;height:7.2px;background:#fbf872;border:1px solid #777a40"></div>
<div class="a t sf" style="left:179.6px;top:399.6px;font-family:'Liberation Serif',serif;font-weight:normal;font-style:normal;font-size:8.1px;line-height:8.1px;color:#2e2e2e;">4.</div>
<div class="a t sf" style="left:194.8px;top:399.6px;font-family:'Liberation Serif',serif;font-weight:normal;font-style:normal;font-size:8.1px;line-height:8.1px;color:#2e2e2e;">Have you/has your child had a live vaccine in the past 4 weeks? (measles, mumps, &amp; rubella, varicella, yellow fever, herpes</div>
<div class="a" style="left:615.4px;top:398.3px;width:9.2px;height:9.2px;background:#fdfc9a"></div>
<div class="a" style="left:616.4px;top:399.3px;width:7.2px;height:7.2px;background:#fbf872;border:1px solid #777a40"></div>
<div class="a" style="left:645.5px;top:398.3px;width:9.2px;height:9.2px;background:#fdfc9a"></div>
<div class="a" style="left:646.5px;top:399.3px;width:7.2px;height:7.2px;background:#fbf872;border:1px solid #777a40"></div>
<div class="a t sf" style="left:194.8px;top:363.9px;font-family:'Liberation Serif',serif;font-weight:normal;font-style:normal;font-size:8.1px;line-height:8.1px;color:#2e2e2e;transform:scaleX(1.009);transform-origin:0 0;">Have you/has your child ever had a TB skin test </div>
<div class="a t sf" style="left:353.9px;top:363.9px;font-family:'Liberation Serif',serif;font-weight:bold;font-style:normal;font-size:8.1px;line-height:8.1px;color:#161616;transform:scaleX(1.009);transform-origin:0 0;">on their forearm</div>
<div class="a t sf" style="left:411.7px;top:363.9px;font-family:'Liberation Serif',serif;font-weight:normal;font-style:normal;font-size:8.1px;line-height:8.1px;color:#2e2e2e;transform:scaleX(1.009);transform-origin:0 0;"> that caused a blister?</div>
<div class="a t sf" style="left:194.8px;top:408.1px;font-family:'Liberation Serif',serif;font-weight:normal;font-style:normal;font-size:8.1px;line-height:8.1px;color:#2e2e2e;transform:scaleX(1.011);transform-origin:0 0;">zoster or live attenuated influenza vaccine [ie. Flumist])?</div>
<div class="a t sf" style="left:238.4px;top:426.8px;font-family:'Liberation Serif',serif;font-weight:bold;font-style:italic;font-size:8.0px;line-height:8.0px;color:#111;transform:scaleX(1.017);transform-origin:0 0;">If the client answers YES to ANY of the above 4 questions then they should NOT have a tuberculin skin test.</div>
<div class="a" style="left:173.1px;top:442.9px;width:493.6px;height:15.5px;background:#e0e4f2"></div>
<div class="a" style="left:173.1px;top:442.3px;width:493.6px;height:1.1px;background:#505050"></div>
<div class="a" style="left:173.1px;top:457.8px;width:493.6px;height:1.1px;background:#505050"></div>
<div class="a" style="left:172.5px;top:442.9px;width:1.1px;height:27.1px;background:#505050"></div>
<div class="a" style="left:666.2px;top:442.9px;width:1.1px;height:27.1px;background:#505050"></div>
<div class="a" style="left:424.3px;top:458.4px;width:1.1px;height:11.6px;background:#505050"></div>
<div class="a t sf" style="left:178.2px;top:446.4px;font-family:'Liberation Serif',serif;font-weight:bold;font-style:normal;font-size:10.2px;line-height:10.2px;color:#050505;transform:scaleX(1.060);transform-origin:0 0;">Consent for Tuberculin Skin Test (TST)</div>
<div class="a" style="left:178.0px;top:463.0px;width:5.0px;height:5.0px;border:1px solid #666"></div>
<div class="a t sf" style="left:184.7px;top:462.5px;font-family:'Liberation Serif',serif;font-weight:normal;font-style:normal;font-size:8.1px;line-height:8.1px;color:#2e2e2e;">I have read or had explained to me information about the TST</div>
<div class="a t sf" style="left:428.8px;top:462.5px;font-family:'Liberation Serif',serif;font-weight:normal;font-style:normal;font-size:8.1px;line-height:8.1px;color:#2e2e2e;transform:scaleX(1.016);transform-origin:0 0;">*Form of Consent:</div>
<div class="a" style="left:493.2px;top:461.5px;width:9.3px;height:9.3px;background:#fdfc9a"></div>
<div class="a" style="left:494.2px;top:462.5px;width:7.3px;height:7.3px;background:#fbf872;border:1px solid #777a40"></div>
<div class="a t sf" style="left:501.7px;top:462.5px;font-family:'Liberation Serif',serif;font-weight:normal;font-style:normal;font-size:8.1px;line-height:8.1px;color:#2e2e2e;transform:scaleX(1.118);transform-origin:0 0;">Written</div>
<div class="a" style="left:532.4px;top:461.5px;width:9.3px;height:9.3px;background:#fdfc9a"></div>
<div class="a" style="left:533.4px;top:462.5px;width:7.3px;height:7.3px;background:#fbf872;border:1px solid #777a40"></div>
<div class="a t sf" style="left:541.0px;top:462.5px;font-family:'Liberation Serif',serif;font-weight:normal;font-style:normal;font-size:8.1px;line-height:8.1px;color:#2e2e2e;transform:scaleX(1.135);transform-origin:0 0;">Verbal</div>
<div class="a" style="left:133.0px;top:467.4px;width:566.0px;height:17.0px;background:#f2f2f2;border-top:1px solid #e6e6e6"></div>
<div class="a" style="left:128.5px;top:484.4px;width:571.0px;height:5.6px;background:#fff"></div>
<div class="a" style="left:410.0px;top:484.4px;width:1.0px;height:5.6px;background:#333"></div>
<svg class="a" style="left:360.8px;top:471.0px" width="12" height="12" viewBox="0 0 12 12"><rect x="2" y="2" width="1.8" height="8" fill="#c2c2c2"/><path d="M10 2 L4 6 L10 10Z" fill="#c2c2c2"/></svg>
<svg class="a" style="left:377.6px;top:471.0px" width="12" height="12" viewBox="0 0 12 12"><path d="M8 2 L3.5 6 L8 10Z" fill="#c2c2c2"/></svg>
<div class="a t" style="left:395.0px;top:474.1px;font-family:'Liberation Sans',sans-serif;font-weight:bold;font-style:normal;font-size:6.8px;line-height:6.8px;color:#333;transform:scaleX(1.149);transform-origin:0 0;">1 of 2</div>
<svg class="a" style="left:438.5px;top:471.0px" width="12" height="12" viewBox="0 0 12 12"><path d="M3 4.5 L6 7.5 L9 4.5" stroke="#999" stroke-width="1" fill="none"/></svg>
<svg class="a" style="left:451.0px;top:471.0px" width="12" height="12" viewBox="0 0 12 12"><path d="M4 2 L8.5 6 L4 10Z" fill="#e9c44a"/></svg>
<svg class="a" style="left:469.5px;top:471.0px" width="12" height="12" viewBox="0 0 12 12"><path d="M2 2 L7.5 6 L2 10Z" fill="#e9c44a"/><rect x="8" y="2" width="2" height="8" fill="#e9c44a"/></svg>
<div class="a" style="left:486.4px;top:470.5px;width:1.0px;height:13.0px;background:#c8c8c8"></div>
<svg class="a" style="left:491.0px;top:471.0px" width="12" height="12" viewBox="0 0 12 12"><circle cx="6" cy="6" r="4.8" fill="#a8a8a8"/><circle cx="6" cy="6" r="1.5" fill="#eeeeee"/></svg>
<svg class="a" style="left:508.0px;top:471.0px" width="12" height="12" viewBox="0 0 12 12"><circle cx="6" cy="6" r="4.8" fill="#a8a8a8"/><circle cx="6" cy="6" r="1.5" fill="#eeeeee"/></svg>
<div class="a" style="left:524.7px;top:470.5px;width:1.0px;height:13.0px;background:#c8c8c8"></div>
<div class="a t" style="left:528.6px;top:474.0px;font-family:'Liberation Sans',sans-serif;font-weight:bold;font-style:normal;font-size:6.9px;line-height:6.9px;color:#333;transform:scaleX(1.186);transform-origin:0 0;">113.11%</div>
<svg class="a" style="left:572.6px;top:471.0px" width="12" height="12" viewBox="0 0 12 12"><path d="M3 4.5 L6 7.5 L9 4.5" stroke="#999" stroke-width="1" fill="none"/></svg>
<div class="a" style="left:619.7px;top:468.8px;width:16.4px;height:13.6px;background:#cde0f3"></div>
<svg class="a" style="left:603.4px;top:471.0px" width="12" height="12" viewBox="0 0 12 12"><rect x="3" y="1.5" width="6" height="9" fill="#f4f8fc" stroke="#5a8fc0" stroke-width="1"/></svg>
<svg class="a" style="left:621.4px;top:471.0px" width="12" height="12" viewBox="0 0 12 12"><rect x="3" y="1.5" width="6" height="4" fill="#f4f8fc" stroke="#4a7fb0" stroke-width="1"/><rect x="3" y="6.5" width="6" height="4" fill="#f4f8fc" stroke="#4a7fb0" stroke-width="1"/></svg>
<svg class="a" style="left:637.9px;top:471.0px" width="12" height="12" viewBox="0 0 12 12"><rect x="2" y="1.5" width="3.6" height="4" fill="#f4f8fc" stroke="#5a8fc0" stroke-width="0.9"/><rect x="6.4" y="1.5" width="3.6" height="4" fill="#f4f8fc" stroke="#5a8fc0" stroke-width="0.9"/><rect x="2" y="6.5" width="3.6" height="4" fill="#f4f8fc" stroke="#5a8fc0" stroke-width="0.9"/><rect x="6.4" y="6.5" width="3.6" height="4" fill="#f4f8fc" stroke="#5a8fc0" stroke-width="0.9"/></svg>
<svg class="a" style="left:655.3px;top:471.0px" width="12" height="12" viewBox="0 0 12 12"><rect x="1.5" y="2" width="4" height="8" fill="#f4f8fc" stroke="#5a8fc0" stroke-width="1"/><rect x="6.5" y="2" width="4" height="8" fill="#f4f8fc" stroke="#5a8fc0" stroke-width="1"/></svg>
<svg class="a" style="left:138.7px;top:133.0px" width="12" height="12" viewBox="0 0 12 12"><path d="M1 3 L5 3 L6 4.5 L11 4.5 L11 10.5 L1 10.5Z" fill="#cdc3ad"/></svg>
<svg class="a" style="left:156.2px;top:132.5px" width="13" height="13" viewBox="0 0 13 13"><rect x="1" y="1" width="7.5" height="7.5" fill="#4a4a4a"/><rect x="2.5" y="1.5" width="4.5" height="2.8" fill="#e0e0e0"/><rect x="4.5" y="5" width="7.5" height="7" fill="#dcc060" stroke="#555" stroke-width="0.8"/></svg>
<svg class="a" style="left:173.3px;top:133.0px" width="13" height="12" viewBox="0 0 13 12"><rect x="3" y="1.5" width="6.5" height="3" fill="#eee" stroke="#777" stroke-width="0.7"/><rect x="1" y="4.5" width="10.5" height="4.5" rx="1" fill="#7b89ad"/><rect x="3" y="8" width="6.5" height="3" fill="#eee" stroke="#777" stroke-width="0.7"/></svg>
<div class="a" style="left:190.7px;top:131.5px;width:1.0px;height:15.0px;background:#bdbdbd"></div>
<svg class="a" style="left:195.8px;top:133.0px" width="12" height="12" viewBox="0 0 12 12"><rect x="2" y="2" width="1.8" height="8" fill="#bdbdbd"/><path d="M10.5 2 L4.5 6 L10.5 10Z" fill="#c6c6c6"/></svg>
<svg class="a" style="left:213.0px;top:133.0px" width="12" height="12" viewBox="0 0 12 12"><path d="M8.5 2 L3.5 6 L8.5 10Z" fill="#c6c6c6"/></svg>
<svg class="a" style="left:230.0px;top:133.0px" width="12" height="12" viewBox="0 0 12 12"><path d="M3.8 1.8 L9 6 L3.8 10.2Z" fill="#e3b83e"/></svg>
<svg class="a" style="left:247.3px;top:133.0px" width="12" height="12" viewBox="0 0 12 12"><path d="M1.5 2 L7.5 6 L1.5 10Z" fill="#e3b83e"/><rect x="8.2" y="2" width="2" height="8" fill="#e3b83e"/></svg>
<div class="a" style="left:264.7px;top:131.5px;width:1.0px;height:15.0px;background:#bdbdbd"></div>
<svg class="a" style="left:268.4px;top:133.0px" width="12" height="12" viewBox="0 0 12 12"><circle cx="6" cy="6" r="5.2" fill="#a0a0a0"/><circle cx="6" cy="6" r="1.6" fill="#f0f0f0"/></svg>
<svg class="a" style="left:286.4px;top:133.0px" width="12" height="12" viewBox="0 0 12 12"><circle cx="6" cy="6" r="5.2" fill="#a0a0a0"/><circle cx="6" cy="6" r="1.6" fill="#f0f0f0"/></svg>
<div class="a" style="left:302.5px;top:131.5px;width:1.0px;height:15.0px;background:#bdbdbd"></div>
<svg class="a" style="left:307.3px;top:132.5px" width="12" height="13" viewBox="0 0 12 13"><rect x="1" y="1" width="6.5" height="7.5" fill="#dbe6f4" stroke="#556" stroke-width="0.8"/><rect x="4.5" y="4" width="6.5" height="7.5" fill="#f6f6f6" stroke="#556" stroke-width="0.8"/></svg>
<svg class="a" style="left:324.6px;top:132.5px" width="12" height="13" viewBox="0 0 12 13"><rect x="4.5" y="1" width="6.5" height="7.5" fill="#dbe6f4" stroke="#556" stroke-width="0.8"/><rect x="1" y="4" width="6.5" height="7.5" fill="#f6f6f6" stroke="#556" stroke-width="0.8"/></svg>
<div class="a" style="left:341.0px;top:131.5px;width:1.0px;height:15.0px;background:#bdbdbd"></div>
<svg class="a" style="left:345.9px;top:133.0px" width="13" height="13" viewBox="0 0 13 13"><path d="M7.5 8 L11.5 12" stroke="#d39a3c" stroke-width="2.2"/><circle cx="5" cy="5.5" r="4" fill="#3585d2" stroke="#cfe0f0" stroke-width="0.6"/><path d="M3 5.5 L7 5.5 M5 3.5 L5 7.5" stroke="#fff" stroke-width="1.3"/></svg>
<svg class="a" style="left:362.7px;top:133.0px" width="13" height="13" viewBox="0 0 13 13"><path d="M7.5 8 L11.5 12" stroke="#d39a3c" stroke-width="2.2"/><circle cx="5" cy="5.5" r="4" fill="#3585d2" stroke="#cfe0f0" stroke-width="0.6"/><path d="M3 5.5 L7 5.5" stroke="#fff" stroke-width="1.3"/></svg>
<svg class="a" style="left:380.7px;top:133.0px" width="12" height="12" viewBox="0 0 12 12"><circle cx="6" cy="6" r="4.6" fill="#3f8ad6" stroke="#c8daee" stroke-width="1"/><path d="M3.5 6 L8.5 6 M6 3.5 L6 8.5" stroke="#fff" stroke-width="1.3"/></svg>
<svg class="a" style="left:398.5px;top:133.0px" width="12" height="12" viewBox="0 0 12 12"><circle cx="6" cy="6" r="4.6" fill="#3f8ad6" stroke="#c8daee" stroke-width="1"/><path d="M3.5 6 L8.5 6" stroke="#fff" stroke-width="1.3"/></svg>
<div class="a" style="left:415.3px;top:131.5px;width:1.0px;height:15.0px;background:#bdbdbd"></div>
<svg class="a" style="left:419.0px;top:133.0px" width="12" height="12" viewBox="0 0 12 12"><rect x="1.5" y="0.8" width="9" height="10.4" fill="#e2eaf3" stroke="#8aa0b8" stroke-width="0.8"/><path d="M3.2 4 L8.8 4 M3.2 6.5 L8.8 6.5 M3.2 9 L6.5 9" stroke="#6a7a9a" stroke-width="0.7"/></svg>
<svg class="a" style="left:436.7px;top:133.0px" width="12" height="12" viewBox="0 0 12 12"><rect x="1.5" y="0.8" width="9" height="10.4" fill="#e2eaf3" stroke="#8aa0b8" stroke-width="0.8"/><path d="M6 2.5 L6 4 M6 8 L6 9.5 M2.8 6 L4.3 6 M7.7 6 L9.2 6" stroke="#4a5a7a" stroke-width="0.9"/></svg>
<div class="a" style="left:452.4px;top:130.3px;width:16.8px;height:17.3px;background:#c7dcf0;border:1px solid #a6c6e6"></div>
<svg class="a" style="left:454.7px;top:133.0px" width="12" height="12" viewBox="0 0 12 12"><rect x="1.5" y="0.8" width="9" height="10.4" fill="#e8eff7" stroke="#8aa0b8" stroke-width="0.8"/><path d="M2.8 6 L4.8 4.5 L4.8 7.5Z M9.2 6 L7.2 4.5 L7.2 7.5Z" fill="#334"/></svg>
<div class="a" style="left:471.5px;top:131.5px;width:1.0px;height:15.0px;background:#bdbdbd"></div>
<svg class="a" style="left:475.6px;top:133.0px" width="12" height="12" viewBox="0 0 12 12"><rect x="0.8" y="4.5" width="4.8" height="6" rx="1.6" fill="#34508a"/><rect x="6.4" y="4.5" width="4.8" height="6" rx="1.6" fill="#34508a"/><rect x="1.8" y="1.5" width="3" height="4" fill="#34508a"/><rect x="7.2" y="1.5" width="3" height="4" fill="#34508a"/><rect x="4.5" y="4" width="3" height="2.5" fill="#34508a"/></svg>
<svg class="a" style="left:492.9px;top:133.0px" width="12" height="12" viewBox="0 0 12 12"><rect x="2" y="0.8" width="8.5" height="10.4" fill="#f2f2f2" stroke="#8890a0" stroke-width="0.8"/><rect x="3.5" y="1.2" width="3.2" height="5.5" fill="#e3a02e"/></svg>
<div class="a" style="left:510.0px;top:131.5px;width:1.0px;height:15.0px;background:#bdbdbd"></div>
<svg class="a" style="left:513.3px;top:132.5px" width="13" height="13" viewBox="0 0 13 13"><path d="M3 11.5 L1.5 6.5 L2.7 5.8 L4 7.5 L4 2 L5.2 1.2 L6.2 2 L6.2 6 L6.6 1 L7.8 1 L8.2 6 L8.6 2 L9.8 2.2 L9.8 6.8 L10.4 5 L11.6 5.4 L10.4 10 L8.6 12Z" fill="#fbfbfb" stroke="#6878a0" stroke-width="0.8"/></svg>
<div class="a" style="left:532.6px;top:131.5px;width:1.3px;height:15.0px;background:#7a7a7a"></div>
<svg class="a" style="left:533.2px;top:133.0px" width="12" height="12" viewBox="0 0 12 12"><path d="M1 1.5 L11 1.5 L11 4 L10 4 L9.5 2.8 L7 2.8 L7 10.5 L8.5 11 L8.5 11.5 L3.5 11.5 L3.5 11 L5 10.5 L5 2.8 L2.5 2.8 L2 4 L1 4Z" fill="#d6ad52"/></svg>
<svg class="a" style="left:549.1px;top:132.5px" width="13" height="13" viewBox="0 0 13 13"><rect x="1" y="3" width="11" height="8.5" rx="1.2" fill="#c9b88e"/><rect x="3" y="1.8" width="3" height="1.5" fill="#b8a878"/><circle cx="7" cy="7.2" r="2.4" fill="#4e4e4e"/><circle cx="7" cy="7.2" r="1" fill="#999"/></svg>
<svg class="a" style="left:566.7px;top:133.0px" width="12" height="12" viewBox="0 0 12 12"><circle cx="6" cy="6" r="5.2" fill="#3d88dc"/><circle cx="6" cy="6" r="3.4" fill="#6aaaf0"/><circle cx="6.5" cy="6.5" r="1.4" fill="#e0eefc"/></svg>
<div class="a" style="left:584.0px;top:130.7px;width:38.5px;height:17.5px;background:#dddddd;border:1px solid #c2c2c2"></div>
<div class="a t" style="left:586.9px;top:136.1px;font-family:'Liberation Sans',sans-serif;font-weight:normal;font-style:normal;font-size:7.3px;line-height:7.3px;color:#2e2e2e;transform:scaleX(0.977);transform-origin:0 0;">Save As...</div>
<div class="a" style="left:623.3px;top:130.7px;width:37.2px;height:17.5px;background:#dddddd;border:1px solid #c2c2c2"></div>
<div class="a t" style="left:636.5px;top:136.1px;font-family:'Liberation Sans',sans-serif;font-weight:normal;font-style:normal;font-size:7.3px;line-height:7.3px;color:#2e2e2e;transform:scaleX(0.986);transform-origin:0 0;">Ok</div>
<div class="a" style="left:661.3px;top:130.7px;width:36.2px;height:17.5px;background:#dddddd;border:1px solid #c2c2c2"></div>
<div class="a t" style="left:666.8px;top:136.1px;font-family:'Liberation Sans',sans-serif;font-weight:normal;font-style:normal;font-size:7.3px;line-height:7.3px;color:#2e2e2e;transform:scaleX(1.039);transform-origin:0 0;">Cancel</div>
<svg class="a" style="left:673.0px;top:152.5px" width="12" height="12" viewBox="0 0 12 12"><path d="M2 10.2 L3 7.2 L9 1.4 L10.8 3.2 L4.9 9Z" fill="#f3f1b8" stroke="#b5b070" stroke-width="0.8"/><path d="M0.5 11.3 L8 11.3" stroke="#d9e35c" stroke-width="1.6"/></svg>
<svg class="a" style="left:136.5px;top:186.0px" width="13" height="13" viewBox="0 0 13 13"><rect x="2.5" y="1" width="8" height="10.5" fill="#e8eff8" stroke="#9aaabb" stroke-width="0.7"/><rect x="3" y="1.3" width="3.2" height="5.5" fill="#d9a93c"/></svg>
<svg class="a" style="left:136.5px;top:211.5px" width="13" height="13" viewBox="0 0 13 13"><rect x="2.5" y="1" width="8" height="10.5" fill="#e4ecf7" stroke="#6a8ab8" stroke-width="0.7"/><path d="M4 4 L9 4 M4 6.5 L9 6.5 M4 9 L9 9 M6.5 3 L6.5 10" stroke="#6a8ab8" stroke-width="0.6"/></svg>
<svg class="a" style="left:136.5px;top:235.9px" width="13" height="13" viewBox="0 0 13 13"><rect x="2.5" y="1" width="8" height="10.5" fill="#e8eff8" stroke="#9aaabb" stroke-width="0.7"/><path d="M4 10.5 L10.5 3" stroke="#8a9ac8" stroke-width="1.6"/></svg>
<svg class="a" style="left:136.5px;top:260.2px" width="13" height="13" viewBox="0 0 13 13"><path d="M6.5 1.2 L12 5 L6.5 8.8 L1 5Z" fill="#9bc2ea" stroke="#f4f8fc" stroke-width="0.7"/><path d="M1 7.8 L6.5 11.5 L12 7.8" fill="none" stroke="#eef4fa" stroke-width="1.1"/></svg>
<svg class="a" style="left:136.5px;top:443.5px" width="13" height="13" viewBox="0 0 13 13"><path d="M2 11.2 L3 8 L9.2 1.8 L11.2 3.8 L5 10Z" fill="#e6bf62" stroke="#c99a30" stroke-width="0.7"/></svg>
<div class="a" style="left:725.2px;top:104.6px;width:130.0px;height:332.5px;background:#fff;border:1px solid #a0a0a0;border-left:1.4px solid #8a8a8a;border-top:1px solid #c0ccd8"></div>
<div class="a" style="left:726.4px;top:105.6px;width:125.0px;height:13.0px;background:#edf1f6"></div>
<svg class="a" style="left:728.8px;top:108.8px" width="6.5" height="6.5" viewBox="0 0 7 7"><circle cx="3.5" cy="2.6" r="2.3" fill="#a8484a"/><path d="M0.6 7 L1.2 4.6 L5.8 4.6 L6.4 7Z" fill="#3a2a2a"/><rect x="2" y="2.2" width="3" height="1" fill="#e8c8c0"/></svg>
<div class="a t" style="left:739.8px;top:109.8px;font-family:'Liberation Sans',sans-serif;font-weight:normal;font-style:normal;font-size:6.7px;line-height:6.7px;color:#b7bfcb;transform:scaleX(0.992);transform-origin:0 0;">Immunization Coverage Report</div>
<div class="a t" style="left:728.4px;top:122.8px;font-family:'Liberation Sans',sans-serif;font-weight:normal;font-style:normal;font-size:7.2px;line-height:7.2px;color:#262626;transform:scaleX(0.982);transform-origin:0 0;">Consolidate Communities</div>
<div class="a" style="left:815.4px;top:121.4px;width:7.6px;height:7.1px;border:1px solid #3c3c3c"></div>
<div class="a t" style="left:836.1px;top:122.8px;font-family:'Liberation Sans',sans-serif;font-weight:normal;font-style:normal;font-size:7.2px;line-height:7.2px;color:#262626;">(Ov</div>
<div class="a" style="left:727.4px;top:134.2px;width:125.0px;height:91.3px;background:#fff;border-top:1px solid #8a8a8a;border-left:1.3px solid #5a5a5a;border-bottom:1px solid #e4e4e4"></div>
<div class="a" style="left:728.5px;top:146.0px;width:124.0px;height:1.1px;background:#707070"></div>
<div class="a t" style="left:728.2px;top:138.4px;font-family:'Liberation Sans',sans-serif;font-weight:bold;font-style:normal;font-size:7.3px;line-height:7.3px;color:#121212;transform:scaleX(0.989);transform-origin:0 0;">Community</div>
<div class="a t" style="left:728.2px;top:149.4px;font-family:'Liberation Sans',sans-serif;font-weight:normal;font-style:normal;font-size:7.3px;line-height:7.3px;color:#222;">_All</div>
<div class="a t" style="left:728.2px;top:160.4px;font-family:'Liberation Sans',sans-serif;font-weight:normal;font-style:normal;font-size:7.3px;line-height:7.3px;color:#222;transform:scaleX(0.991);transform-origin:0 0;">Community 1</div>
<div class="a t" style="left:728.2px;top:171.4px;font-family:'Liberation Sans',sans-serif;font-weight:normal;font-style:normal;font-size:7.3px;line-height:7.3px;color:#222;transform:scaleX(0.991);transform-origin:0 0;">Community 2</div>
<div class="a t" style="left:728.1px;top:231.6px;font-family:'Liberation Sans',sans-serif;font-weight:normal;font-style:normal;font-size:7.2px;line-height:7.2px;color:#333;transform:scaleX(0.978);transform-origin:0 0;">Age Range:</div>
<div class="a" style="left:810.0px;top:229.2px;width:45.0px;height:12.5px;background:#fff;border:1px solid #cfcfcf;border-bottom:1px solid #bdbdbd"></div>
<div class="a t" style="left:811.9px;top:231.6px;font-family:'Liberation Sans',sans-serif;font-weight:normal;font-style:normal;font-size:7.2px;line-height:7.2px;color:#262626;">Grade 9 (13</div>
<div class="a t" style="left:728.1px;top:252.7px;font-family:'Liberation Sans',sans-serif;font-weight:normal;font-style:normal;font-size:7.2px;line-height:7.2px;color:#333;transform:scaleX(0.962);transform-origin:0 0;">On Reserve:</div>
<div class="a" style="left:810.0px;top:249.5px;width:45.0px;height:12.5px;background:#fff;border:1px solid #cfcfcf;border-bottom:1px solid #bdbdbd"></div>
<div class="a t" style="left:811.9px;top:252.7px;font-family:'Liberation Sans',sans-serif;font-weight:normal;font-style:normal;font-size:7.2px;line-height:7.2px;color:#262626;">On Reserve</div>
<div class="a t" style="left:728.1px;top:273.3px;font-family:'Liberation Sans',sans-serif;font-weight:normal;font-style:normal;font-size:7.2px;line-height:7.2px;color:#333;transform:scaleX(0.959);transform-origin:0 0;">Status:</div>
<div class="a" style="left:810.0px;top:270.2px;width:45.0px;height:12.5px;background:#fff;border:1px solid #cfcfcf;border-bottom:1px solid #bdbdbd"></div>
<div class="a t" style="left:811.9px;top:273.3px;font-family:'Liberation Sans',sans-serif;font-weight:normal;font-style:normal;font-size:7.2px;line-height:7.2px;color:#262626;">Status Only</div>
<div class="a t" style="left:728.1px;top:295.2px;font-family:'Liberation Sans',sans-serif;font-weight:normal;font-style:normal;font-size:7.2px;line-height:7.2px;color:#333;">Immunization Status:</div>
<div class="a" style="left:810.0px;top:292.6px;width:45.0px;height:12.5px;background:#fff;border:1px solid #cfcfcf;border-bottom:1px solid #bdbdbd"></div>
<div class="a t" style="left:811.9px;top:295.2px;font-family:'Liberation Sans',sans-serif;font-weight:normal;font-style:normal;font-size:7.2px;line-height:7.2px;color:#262626;">Active Stat</div>
<div class="a t" style="left:806.6px;top:229.6px;font-family:'Liberation Sans',sans-serif;font-weight:normal;font-style:normal;font-size:6.5px;line-height:6.5px;color:#d04848;">*</div>
<div class="a t" style="left:728.1px;top:318.6px;font-family:'Liberation Sans',sans-serif;font-weight:normal;font-style:normal;font-size:7.2px;line-height:7.2px;color:#333;transform:scaleX(1.010);transform-origin:0 0;">Include details:</div>
<div class="a" style="left:810.3px;top:317.2px;width:7.7px;height:7.6px;border:1px solid #555;background:#fff"></div>
<svg class="a" style="left:810.1px;top:317.0px" width="8" height="8" viewBox="0 0 8 8"><path d="M1.2 3.8 L3.2 6 L6.8 1.5" stroke="#666" stroke-width="1" fill="none"/></svg>
<div class="a t" style="left:728.1px;top:335.1px;font-family:'Liberation Sans',sans-serif;font-weight:normal;font-style:normal;font-size:7.2px;line-height:7.2px;color:#333;">Include All</div>
<div class="a" style="left:810.3px;top:333.8px;width:7.7px;height:7.6px;border:1px solid #555;background:#fff"></div>
<div class="a t" style="left:728.1px;top:390.1px;font-family:'Liberation Sans',sans-serif;font-weight:normal;font-style:normal;font-size:7.2px;line-height:7.2px;color:#333;">Include upto date</div>
<div class="a" style="left:810.3px;top:388.7px;width:7.7px;height:7.6px;border:1px solid #555;background:#fff"></div>
<div class="a t" style="left:738.9px;top:349.1px;font-family:'Liberation Sans',sans-serif;font-weight:bold;font-style:normal;font-size:5.9px;line-height:5.9px;color:#161616;transform:scaleX(1.108);transform-origin:0 0;">If include all is ticked, this negates</div>
<div class="a t" style="left:738.9px;top:356.7px;font-family:'Liberation Sans',sans-serif;font-weight:bold;font-style:normal;font-size:5.9px;line-height:5.9px;color:#161616;transform:scaleX(1.092);transform-origin:0 0;">and "Immunization Status" Paramet</div>
<div class="a t" style="left:728.1px;top:371.2px;font-family:'Liberation Sans',sans-serif;font-weight:normal;font-style:normal;font-size:7.2px;line-height:7.2px;color:#333;transform:scaleX(0.951);transform-origin:0 0;">Cutoff Date:</div>
<div class="a" style="left:810.0px;top:368.6px;width:45.0px;height:11.4px;background:#fff;border:1px solid #cfcfcf;border-bottom:1px solid #bdbdbd"></div>
<div class="a t" style="left:810.8px;top:371.2px;font-family:'Liberation Sans',sans-serif;font-weight:normal;font-style:normal;font-size:7.2px;line-height:7.2px;color:#262626;">31-Dec-201</div>
</div>
</body></html>
